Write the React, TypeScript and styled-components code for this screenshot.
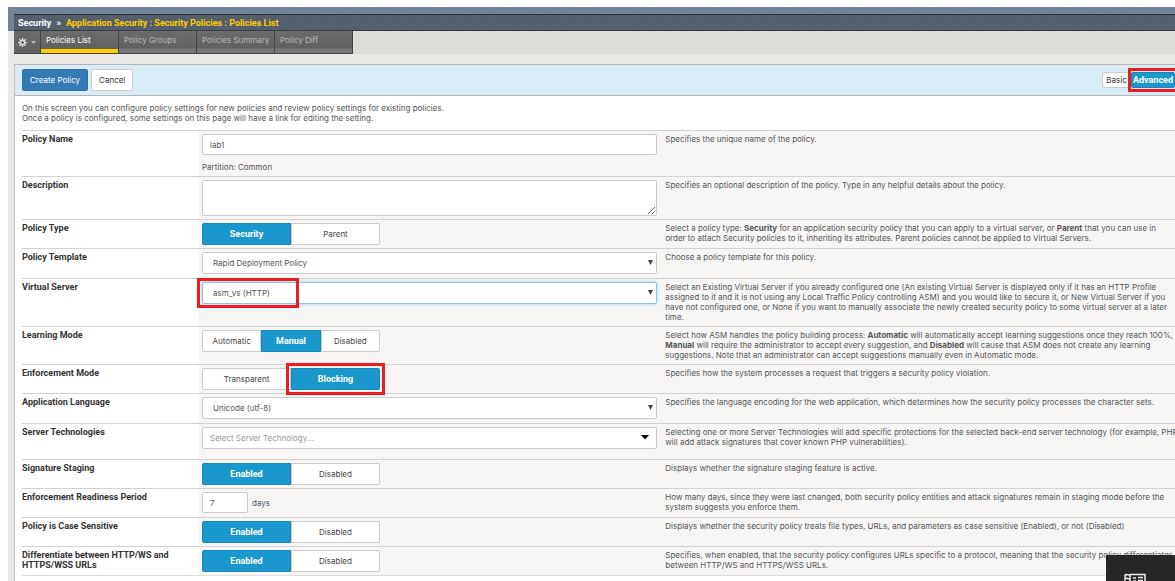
import React from "react";
import styled, { createGlobalStyle, css } from "styled-components";

const font = 'Inter, "Liberation Sans", Arial, sans-serif';

const strong = css`
  font: bold 9px/10px Roboto, "Liberation Sans", Arial, sans-serif;
`;

const GlobalStyle = createGlobalStyle`
  * { box-sizing: border-box; }
  body {
    margin: 0;
    background: #fff;
    color: #555;
    font: 8px/10px ${font};
  }
  button, input, select, textarea { font: inherit; color: inherit; margin: 0; }
`;

const hatch = (base: string, line: string) =>
  `repeating-linear-gradient(135deg, ${base} 0 2px, ${line} 2px 3px)`;

const Page = styled.div`
  display: flex;
  flex-direction: column;
  min-height: 100vh;
  padding: 7px 0 0 8px;
  overflow: hidden;
`;

const Masthead = styled.header`
  padding: 7px 0 0 6px;
  background: ${hatch("#76869a", "#708094")};
`;

const Breadcrumb = styled.div`
  ${strong}
  display: flex;
  align-items: center;
  gap: 5px;
  height: 17px;
  padding-left: 4px;
  border-top: 1px solid #2e343b;
  border-bottom: 1px solid #353b42;
  background: ${hatch("#55616e", "#515c68")};
  color: #fff;
`;

const Trail = styled.a`
  color: #ffcc00;
  text-decoration: none;
`;

const Body = styled.div`
  flex: 1;
  display: flex;
  flex-direction: column;
  padding-left: 6px;
  background: #e9e8e4;
`;

const MenuBar = styled.nav`
  display: flex;
  height: 23px;
  margin-bottom: 10px;
  background: #dddcd8;
`;

const tabFace = css`
  border: 0;
  border-right: 1px solid #444;
  border-bottom: 1px solid #444;
  background: linear-gradient(#6c6c6c, #616161 17px, #797979 18px, #747474);
`;

const GearButton = styled.button`
  ${tabFace}
  display: flex;
  align-items: center;
  justify-content: center;
  gap: 4px;
  width: 27px;
  padding: 0;
  background: linear-gradient(#6c6c6c, #606060);
`;

const Tab = styled.a<{ $active?: boolean }>`
  ${tabFace}
  width: 78px;
  padding: 4px 0 0 5px;
  color: #b8b8b8;
  white-space: nowrap;
  text-decoration: none;
  ${(p) =>
    p.$active &&
    css`
      color: #fff;
      background: linear-gradient(#6c6c6c, #616161 18px, #ffcc00 18px);
    `}
`;

const Panel = styled.main`
  flex: 1;
  border-top: 1px solid #b4b4b4;
  border-left: 1px solid #c4c4c4;
  background: #fff;
`;

const Toolbar = styled.div`
  display: flex;
  align-items: center;
  gap: 3px;
  height: 31px;
  padding-left: 7px;
  border-bottom: 1px solid #b4b4b4;
  background: #d9ecf5;
`;

const Action = styled.button<{ $primary?: boolean }>`
  height: 22px;
  padding: 0 7px;
  border: 1px solid ${(p) => (p.$primary ? "#2e6da4" : "#ccc")};
  border-radius: 2px;
  background: ${(p) => (p.$primary ? "#337ab7" : "#fff")};
  color: ${(p) => (p.$primary ? "#fff" : "#333")};
`;

const ViewSwitch = styled.div`
  position: relative;
  display: flex;
  margin-left: auto;
`;

const ViewButton = styled.button<{ $active?: boolean }>`
  width: ${(p) => (p.$active ? 44 : 29)}px;
  height: 16px;
  padding: 0;
  border: 1px solid ${(p) => (p.$active ? "#1a87b9" : "#ccc")};
  border-radius: 2px;
  background: ${(p) => (p.$active ? "#1a98cd" : "#fff")};
  color: ${(p) => (p.$active ? "#fff" : "#333")};
  ${(p) => p.$active && strong}
`;

const Highlight = styled.span`
  position: absolute;
  z-index: 1;
  border: 3px solid #ed1c24;
  pointer-events: none;
`;

const ViewHighlight = styled(Highlight)`
  inset: -4px -4px -4px 26px;
`;

const ServerHighlight = styled(Highlight)`
  top: -4px;
  bottom: -4px;
  left: -5px;
  width: 102px;
`;

const ModeHighlight = styled(Highlight)`
  inset: -5px;
`;

const Intro = styled.p`
  margin: 0;
  padding: 7px;
`;

const Settings = styled.form`
  margin-left: 7px;
  border-bottom: 1px solid #ddd;
`;

const Row = styled.div<{ $height: number }>`
  display: grid;
  grid-template-columns: 177px 9fr 10fr;
  min-height: ${(p) => p.$height}px;
  border-top: 1px solid #d2d2d2;
`;

const Name = styled.label`
  ${strong}
  padding: 3px 24px 0 0;
  color: #333;
`;

const Control = styled.div`
  padding: 3px 4px 0 3px;
  background: #f7f6f5;
`;

const Help = styled.p`
  margin: 0 -4px 0 0;
  padding: 3px 0 0 4px;
  background: #f7f6f5;
`;

const field = css`
  display: block;
  width: 100%;
  border: 1px solid #ccc;
  border-radius: 2px;
  background: #fff;
  color: #555;
  outline: 0;
`;

const TextInput = styled.input`
  ${field}
  height: 21px;
  padding: 0 7px;
`;

const DaysInput = styled(TextInput)`
  width: 46px;
`;

const TextArea = styled.textarea`
  ${field}
  height: 36px;
  padding: 4px 7px;
  resize: vertical;
`;

const SelectWrap = styled.div`
  position: relative;
`;

const Select = styled.select<{ $focused?: boolean; $hint?: boolean }>`
  ${field}
  height: 22px;
  padding: 0 20px 0 ${(p) => (p.$hint ? 7 : 10)}px;
  appearance: none;
  ${(p) => p.$hint && "color: #999;"}
  ${(p) =>
    p.$focused &&
    css`
      border-color: #8cc1e8;
      box-shadow: 0 0 4px #a9d2ef;
    `}
`;

const Arrow = styled.svg`
  position: absolute;
  top: 8px;
  right: 4px;
  pointer-events: none;
`;

const WideArrow = styled(Arrow)`
  right: 8px;
`;

const Partition = styled.div`
  padding-top: 7px;
`;

const Inline = styled.div`
  display: flex;
  align-items: center;
  gap: 4px;
`;

const Segments = styled.div`
  display: flex;
  width: 178px;
`;

const Slot = styled.div`
  position: relative;
  flex: 1;
  display: flex;
`;

const Segment = styled.button<{ $active?: boolean }>`
  flex: 1;
  height: 22px;
  padding: 0;
  border: 1px solid ${(p) => (p.$active ? "#1a87b9" : "#ccc")};
  background: ${(p) => (p.$active ? "#1a98cd" : "#fff")};
  color: ${(p) => (p.$active ? "#fff" : "#444")};
  ${(p) => p.$active && strong}

  ${Slot}:first-child > & { border-radius: 2px 0 0 2px; }
  ${Slot}:last-child > & { border-radius: 0 2px 2px 0; }
`;

const NewsButton = styled.button`
  position: fixed;
  right: 0;
  bottom: 0;
  width: 69px;
  height: 26px;
  padding: 18px 0 0 18px;
  border: 0;
  background: #262624;
  overflow: hidden;
`;

const NewsIcon = styled.svg`
  display: block;
`;

function Toggle({ options, value, marked }: { options: string[]; value: string; marked?: boolean }) {
  return (
    <Segments role="group">
      {options.map((option) => (
        <Slot key={option}>
          <Segment type="button" $active={option === value} aria-pressed={option === value}>
            {option}
          </Segment>
          {marked && option === value && <ModeHighlight />}
        </Slot>
      ))}
    </Segments>
  );
}

function Dropdown({ id, value, focused }: { id: string; value: string; focused?: boolean }) {
  return (
    <SelectWrap>
      <Select id={id} $focused={focused}>
        <option>{value}</option>
      </Select>
      <Arrow width="5" height="5" viewBox="0 0 5 5">
        <path d="M0 0h5L2.500 5z" fill="#444" />
      </Arrow>
      {focused && <ServerHighlight />}
    </SelectWrap>
  );
}

interface Setting {
  id: string;
  name: string;
  height: number;
  control: React.ReactNode;
  help: React.ReactNode;
}

const onOff = ["Enabled", "Disabled"];

const settings: Setting[] = [
  {
    id: "name",
    name: "Policy Name",
    height: 46,
    control: (
      <>
        <TextInput id="name" defaultValue="lab1" />
        <Partition>Partition: Common</Partition>
      </>
    ),
    help: "Specifies the unique name of the policy.",
  },
  {
    id: "description",
    name: "Description",
    height: 43,
    control: <TextArea id="description" />,
    help: "Specifies an optional description of the policy. Type in any helpful details about the policy.",
  },
  {
    id: "type",
    name: "Policy Type",
    height: 29,
    control: <Toggle options={["Security", "Parent"]} value="Security" />,
    help: (
      <>
        Select a policy type: <b>Security</b> for an application security policy that you can apply to a virtual
        server, or <b>Parent</b> that you can use in
        <br />
        order to attach Security policies to it, inheriting its attributes. Parent policies cannot be applied to
        Virtual Servers.
      </>
    ),
  },
  {
    id: "template",
    name: "Policy Template",
    height: 30,
    control: <Dropdown id="template" value="Rapid Deployment Policy" />,
    help: "Choose a policy template for this policy.",
  },
  {
    id: "server",
    name: "Virtual Server",
    height: 48,
    control: <Dropdown id="server" value="asm_vs (HTTP)" focused />,
    help:
      "Select an Existing Virtual Server if you already configured one (An existing Virtual Server is displayed only if it has an HTTP Profile assigned to it and it is not using any Local Traffic Policy controlling ASM) and you would like to secure it, or New Virtual Server if you have not configured one, or None if you want to manually associate the newly created security policy to some virtual server at a later time.",
  },
  {
    id: "learning",
    name: "Learning Mode",
    height: 38,
    control: <Toggle options={["Automatic", "Manual", "Disabled"]} value="Manual" />,
    help: (
      <>
        Select how ASM handles the policy building process: <b>Automatic</b> will automatically accept learning
        suggestions once they reach 100%, <b>Manual</b> will require the administrator to accept every suggestion,
        and <b>Disabled</b> will cause that ASM does not create any learning suggestions. Note that an administrator
        can accept suggestions manually even in Automatic mode.
      </>
    ),
  },
  {
    id: "enforcement",
    name: "Enforcement Mode",
    height: 29,
    control: <Toggle options={["Transparent", "Blocking"]} value="Blocking" marked />,
    help: "Specifies how the system processes a request that triggers a security policy violation.",
  },
  {
    id: "language",
    name: "Application Language",
    height: 30,
    control: <Dropdown id="language" value="Unicode (utf-8)" />,
    help:
      "Specifies the language encoding for the web application, which determines how the security policy processes the character sets.",
  },
  {
    id: "technologies",
    name: "Server Technologies",
    height: 36,
    control: (
      <SelectWrap>
        <Select id="technologies" $hint>
          <option>Select Server Technology...</option>
        </Select>
        <WideArrow width="8" height="5" viewBox="0 0 8 5">
          <path d="M0 0h8L4 4.500z" fill="#000" />
        </WideArrow>
      </SelectWrap>
    ),
    help:
      "Selecting one or more Server Technologies will add specific protections for the selected back-end server technology (for example, PHP will add attack signatures that cover known PHP vulnerabilities).",
  },
  {
    id: "staging",
    name: "Signature Staging",
    height: 29,
    control: <Toggle options={onOff} value="Enabled" />,
    help: "Displays whether the signature staging feature is active.",
  },
  {
    id: "readiness",
    name: "Enforcement Readiness Period",
    height: 29,
    control: (
      <Inline>
        <DaysInput id="readiness" defaultValue="7" />
        days
      </Inline>
    ),
    help:
      "How many days, since they were last changed, both security policy entities and attack signatures remain in staging mode before the system suggests you enforce them.",
  },
  {
    id: "case",
    name: "Policy is Case Sensitive",
    height: 29,
    control: <Toggle options={onOff} value="Enabled" />,
    help:
      "Displays whether the security policy treats file types, URLs, and parameters as case sensitive (Enabled), or not (Disabled)",
  },
  {
    id: "protocol",
    name: "Differentiate between HTTP/WS and HTTPS/WSS URLs",
    height: 29,
    control: <Toggle options={onOff} value="Enabled" />,
    help:
      "Specifies, when enabled, that the security policy configures URLs specific to a protocol, meaning that the security policy differentiates between HTTP/WS and HTTPS/WSS URLs.",
  },
];

export default function App() {
  return (
    <Page>
      <GlobalStyle />
      <Masthead>
        <Breadcrumb>
          <span>Security</span>
          <span>»</span>
          <Trail href="#">Application Security : Security Policies : Policies List</Trail>
        </Breadcrumb>
      </Masthead>
      <Body>
        <MenuBar>
          <GearButton aria-label="Options">
            <svg width="9" height="9" viewBox="0 0 18 18" fill="none" stroke="#ddd">
              <circle cx="9" cy="9" r="4.500" strokeWidth="3" />
              <path
                d="M9 0v4M9 14v4M0 9h4M14 9h4M2.600 2.600l3 3M12.400 12.400l3 3M15.400 2.600l-3 3M5.600 12.400l-3 3"
                strokeWidth="2.500"
              />
            </svg>
            <svg width="5" height="3" viewBox="0 0 5 3">
              <path d="M0 0h5L2.500 3z" fill="#bbb" />
            </svg>
          </GearButton>
          <Tab href="#" $active>Policies List</Tab>
          <Tab href="#">Policy Groups</Tab>
          <Tab href="#">Policies Summary</Tab>
          <Tab href="#">Policy Diff</Tab>
        </MenuBar>
        <Panel>
          <Toolbar>
            <Action $primary>Create Policy</Action>
            <Action>Cancel</Action>
            <ViewSwitch>
              <ViewButton>Basic</ViewButton>
              <ViewButton $active>Advanced</ViewButton>
              <ViewHighlight />
            </ViewSwitch>
          </Toolbar>
          <Intro>
            On this screen you can configure policy settings for new policies and review policy settings for existing
            policies.
            <br />
            Once a policy is configured, some settings on this page will have a link for editing the setting.
          </Intro>
          <Settings>
            {settings.map((s) => (
              <Row key={s.id} $height={s.height}>
                <Name htmlFor={s.id}>{s.name}</Name>
                <Control>{s.control}</Control>
                <Help>{s.help}</Help>
              </Row>
            ))}
          </Settings>
        </Panel>
      </Body>
      <NewsButton aria-label="News">
        <NewsIcon width="22" height="18" viewBox="0 0 22 18" fill="none" stroke="#eee">
          <path d="M6 1.500H21V17M6 1.500V17M1 1.500L6 2M1 1.500V17M1 5l5 1M1 8.500l5 1" strokeWidth="1.500" />
          <path d="M9 5h3M9 8h3M14 4.500h5M14 7.500h5M14 10.500h5" strokeWidth="1.500" />
        </NewsIcon>
      </NewsButton>
    </Page>
  );
}
